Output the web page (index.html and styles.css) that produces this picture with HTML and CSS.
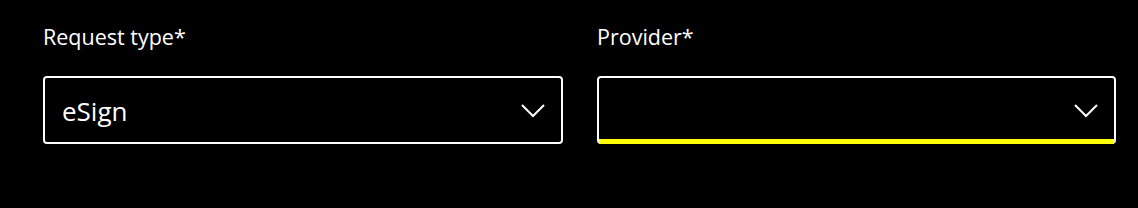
FILE: index.html
```html
<!DOCTYPE html>
<html lang="en">
<head>
    <meta charset="UTF-8">
    <title>Request</title>
    <link rel="stylesheet" href="styles.css">
</head>
<body>
    <div class="form-row">
        <div class="field">
            <label class="field-label" for="requestType">Request type*</label>
            <div class="dropdown" id="requestType" tabindex="0">
                <span class="dropdown-title">eSign</span>
                <svg class="chevron" width="24" height="14" viewBox="0 0 24 14">
                    <path d="M1 1 L12 12 L23 1" fill="none" stroke="#fff" stroke-width="2"/>
                </svg>
            </div>
        </div>
        <div class="field">
            <label class="field-label" for="provider">Provider*</label>
            <div class="dropdown focused" id="provider" tabindex="0">
                <span class="dropdown-title"></span>
                <svg class="chevron" width="24" height="14" viewBox="0 0 24 14">
                    <path d="M1 1 L12 12 L23 1" fill="none" stroke="#fff" stroke-width="2"/>
                </svg>
            </div>
        </div>
    </div>
</body>
</html>
```

FILE: styles.css
```css
body {
    margin: 0;
    background-color: #000;
    color: #fff;
    font-family: "Open Sans", "Noto Sans", sans-serif;
}

.form-row {
    display: grid;
    grid-template-columns: 520px 519px;
    column-gap: 34px;
    padding: 22px 0 0 43px;
}

.field-label {
    display: block;
    font-size: 21.5px;
    line-height: 30px;
    margin-bottom: 24px;
}

.dropdown {
    position: relative;
    display: flex;
    align-items: center;
    justify-content: space-between;
    height: 68px;
    box-sizing: border-box;
    border: 2px solid #fff;
    border-radius: 4px;
    padding: 0 16px 0 17px;
    outline: none;
}

.dropdown-title {
    font-size: 26px;
    line-height: 34px;
    margin-top: 1px;
}

.chevron {
    display: block;
    margin-top: 1px;
}

.dropdown.focused::after {
    content: "";
    position: absolute;
    left: 0;
    right: 0;
    bottom: -2px;
    height: 5px;
    background-color: #ffff00;
}
```
